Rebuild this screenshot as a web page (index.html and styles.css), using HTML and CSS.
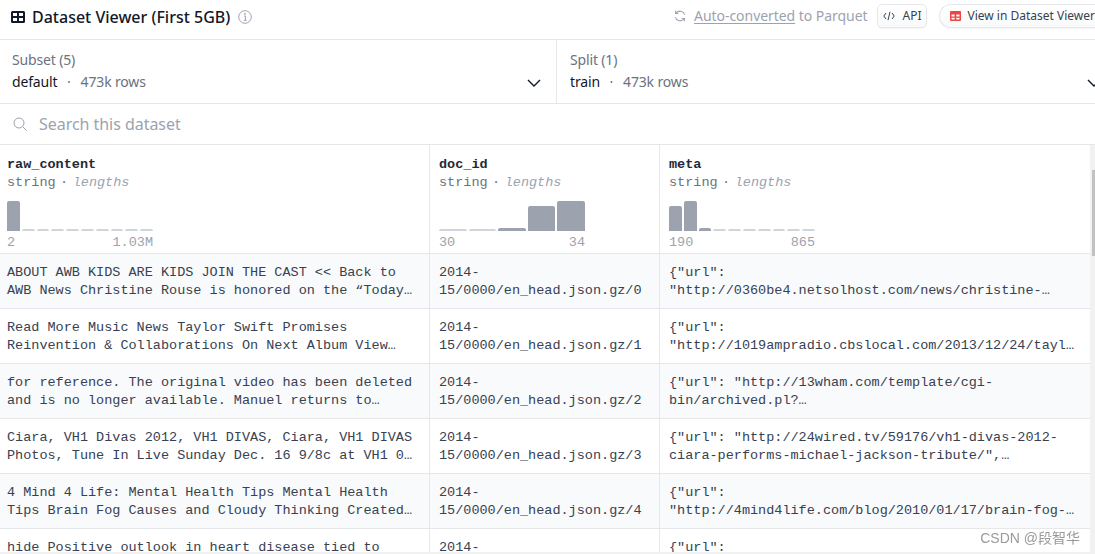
FILE: index.html
```html
<!DOCTYPE html>
<html lang="en">
<head>
<meta charset="utf-8">
<title>Dataset Viewer</title>
<link rel="stylesheet" href="styles.css">
</head>
<body>
<div class="page">
  <header class="topbar">
    <div class="title">
      <svg class="icon-table" viewBox="0 0 14 12" width="14" height="12"><path fill="#111827" fill-rule="evenodd" d="M1.5 0h11A1.5 1.5 0 0 1 14 1.500v9a1.500 1.500 0 0 1-1.500 1.500h-11A1.500 1.500 0 0 1 0 10.500v-9A1.500 1.500 0 0 1 1.500 0zM2 2v3h4V2zm6 0v3h4V2zM2 7v3h4V7zm6 0v3h4V7z"/></svg>
      <span class="title-text">Dataset Viewer (First 5GB)</span>
      <svg class="icon-info" viewBox="0 0 14 14" width="14" height="14"><circle cx="7" cy="7" r="6.300" fill="none" stroke="#9ca3af" stroke-width="1"/><path d="M6 6h1.400v4M5.600 10.300h3" fill="none" stroke="#9ca3af"/><circle cx="7" cy="3.900" r=".9" fill="#9ca3af"/></svg>
    </div>
    <div class="actions">
      <svg class="icon-sync" viewBox="0 0 12 12" width="12" height="12"><path d="M10.700 4.600A5 5 0 0 0 2 3M1.300 7.400A5 5 0 0 0 10 9" fill="none" stroke="#9ca3af" stroke-width="1.100"/><path d="M1.600 .8v2.700h2.700M10.400 11.200V8.500H7.700" fill="none" stroke="#9ca3af" stroke-width="1.100"/></svg>
      <span class="converted"><span class="link">Auto-converted</span> to Parquet</span>
      <span class="btn btn-api"><svg viewBox="0 0 12 10" width="12" height="10"><path d="M3 2 .8 5 3 8M9 2l2.200 3L9 8M7 .8 5 9.200" fill="none" stroke="#374151" stroke-width="1"/></svg>API</span>
      <span class="btn btn-view"><svg viewBox="0 0 11 10" width="11" height="10"><path fill="#ef4444" fill-rule="evenodd" d="M1 0h9a1 1 0 0 1 1 1v8a1 1 0 0 1-1 1H1a1 1 0 0 1-1-1V1a1 1 0 0 1 1-1zm.5 3.500v2h3.200v-2zm4.800 0v2h3.200v-2zM1.500 6.800v1.800h3.200V6.800zm4.800 0v1.800h3.200V6.800z"/></svg>View in Dataset Viewer</span>
    </div>
  </header>

  <section class="selectors">
    <div class="selector subset">
      <div class="sel-text">
        <div class="sel-label">Subset (5)</div>
        <div class="sel-value"><span class="sel-name">default</span><span class="sel-dot">·</span><span>473k rows</span></div>
      </div>
      <svg class="chevron" viewBox="0 0 14 8" width="14" height="8"><path d="M1 1l6 6 6-6" fill="none" stroke="#111827" stroke-width="1.400"/></svg>
    </div>
    <div class="selector split">
      <div class="sel-text">
        <div class="sel-label">Split (1)</div>
        <div class="sel-value"><span class="sel-name">train</span><span class="sel-dot">·</span><span>473k rows</span></div>
      </div>
      <svg class="chevron" viewBox="0 0 14 8" width="14" height="8"><path d="M1 1l6 6 6-6" fill="none" stroke="#111827" stroke-width="1.400"/></svg>
    </div>
  </section>

  <div class="search">
    <svg viewBox="0 0 14 14" width="14" height="14"><circle cx="6" cy="6" r="5" fill="none" stroke="#9ca3af" stroke-width="1"/><path d="M9.700 9.700 13.500 13.500" stroke="#9ca3af" stroke-width="1"/></svg>
    <span>Search this dataset</span>
  </div>

  <div class="table-wrap">
    <div class="grid">
      <div class="th">
        <div class="col-name">raw_content</div>
        <div class="col-type">string<span class="dot">·</span><i>lengths</i></div>
        <div class="hist">
          <b style="height:30px"></b><b class="min"></b><b class="min"></b><b class="min"></b><b class="min"></b><b class="min"></b><b class="min"></b><b class="min"></b><b class="min"></b><b class="min"></b>
        </div>
        <div class="range"><span>2</span><span>1.03M</span></div>
      </div>
      <div class="th">
        <div class="col-name">doc_id</div>
        <div class="col-type">string<span class="dot">·</span><i>lengths</i></div>
        <div class="hist">
          <b class="min"></b><b class="min"></b><b style="height:3px"></b><b style="height:25px"></b><b style="height:30px"></b>
        </div>
        <div class="range"><span>30</span><span>34</span></div>
      </div>
      <div class="th">
        <div class="col-name">meta</div>
        <div class="col-type">string<span class="dot">·</span><i>lengths</i></div>
        <div class="hist">
          <b style="height:25px"></b><b style="height:30px"></b><b style="height:3px"></b><b class="min"></b><b class="min"></b><b class="min"></b><b class="min"></b><b class="min"></b><b class="min"></b><b class="min"></b>
        </div>
        <div class="range"><span>190</span><span>865</span></div>
      </div>

      <div class="td tint">ABOUT AWB KIDS ARE KIDS JOIN THE CAST &lt;&lt; Back to<br>AWB News Christine Rouse is honored on the “Today…</div>
      <div class="td tint">2014-<br>15/0000/en_head.json.gz/0</div>
      <div class="td tint">{"url":<br>"http://0360be4.netsolhost.com/news/christine-…</div>

      <div class="td">Read More Music News Taylor Swift Promises<br>Reinvention &amp; Collaborations On Next Album View…</div>
      <div class="td">2014-<br>15/0000/en_head.json.gz/1</div>
      <div class="td">{"url":<br>"http://1019ampradio.cbslocal.com/2013/12/24/tayl…</div>

      <div class="td tint">for reference. The original video has been deleted<br>and is no longer available. Manuel returns to…</div>
      <div class="td tint">2014-<br>15/0000/en_head.json.gz/2</div>
      <div class="td tint">{"url": "http://13wham.com/template/cgi-<br>bin/archived.pl?…</div>

      <div class="td">Ciara, VH1 Divas 2012, VH1 DIVAS, Ciara, VH1 DIVAS<br>Photos, Tune In Live Sunday Dec. 16 9/8c at VH1 0…</div>
      <div class="td">2014-<br>15/0000/en_head.json.gz/3</div>
      <div class="td">{"url": "http://24wired.tv/59176/vh1-divas-2012-<br>ciara-performs-michael-jackson-tribute/",…</div>

      <div class="td tint">4 Mind 4 Life: Mental Health Tips Mental Health<br>Tips Brain Fog Causes and Cloudy Thinking Created…</div>
      <div class="td tint">2014-<br>15/0000/en_head.json.gz/4</div>
      <div class="td tint">{"url":<br>"http://4mind4life.com/blog/2010/01/17/brain-fog-…</div>

      <div class="td">hide Positive outlook in heart disease tied to</div>
      <div class="td">2014-</div>
      <div class="td">{"url":</div>
    </div>
    <div class="scrollbar"><div class="thumb"></div></div>
  </div>
  <div class="hscroll"></div>
</div>
<div class="watermark">CSDN @段智华</div>
</body>
</html>
```
FILE: styles.css
```css
html, body { margin: 0; padding: 0; height: 100%; overflow: hidden; background: #fff; }
body { font-family: "Noto Sans", "Liberation Sans", sans-serif; color: #111827; }
.page { width: 1095px; height: 554px; display: flex; flex-direction: column; overflow: hidden; }

.topbar { flex: none; height: 31px; padding-bottom: 8px; padding-left: 11px; display: flex; justify-content: space-between; align-items: center; border-bottom: 1px solid #e5e7eb; overflow: hidden; }
.title { display: flex; align-items: center; padding-top: 2px; }
.title-text { font-size: 16px; font-weight: 500; margin-left: 7px; white-space: nowrap; }
.icon-info { margin-left: 8px; }
.actions { display: flex; align-items: center; flex: none; margin-right: -4px; }
.converted { font-size: 14px; color: #9ca3af; margin-left: 8px; white-space: nowrap; letter-spacing: -.05px; }
.link { text-decoration: underline; text-underline-offset: 2px; color: #9ca3af; }
.btn { display: flex; align-items: center; height: 22px; border: 1px solid #e5e7eb; background: linear-gradient(#fff, #f9fafb); font-size: 12px; color: #374151; white-space: nowrap; box-shadow: 0 1px 1px rgba(0,0,0,.04); }
.btn-api { margin-left: 10px; padding: 0 5px; border-radius: 5px; gap: 7px; }
.btn-view { margin-left: 12px; padding: 0 4px 0 10px; border-radius: 12px 0 0 12px; border-right: 0; gap: 6px; }

.selectors { display: flex; height: 63px; flex: none; border-bottom: 1px solid #e5e7eb; overflow: hidden; }
.selector { display: flex; align-items: center; justify-content: space-between; box-sizing: border-box; padding-left: 12px; flex: none; }
.subset { width: 557px; border-right: 1px solid #e5e7eb; padding-right: 15px; }
.subset .chevron { margin-top: 22px; }
.split { width: 538px; padding-left: 13px; padding-right: 0; }
.split .chevron { margin-top: 22px; margin-right: -6px; }
.sel-text { font-size: 14px; line-height: 22px; letter-spacing: -.15px; padding-bottom: 2px; }
.sel-label { color: #6b7280; }
.sel-value { color: #6b7280; display: flex; }
.sel-name { color: #111827; }
.sel-dot { margin: 0 10px 0 9.500px; color: #6b7280; }

.search { height: 40px; flex: none; display: flex; align-items: center; border-bottom: 1px solid #e5e7eb; padding-left: 13px; font-size: 16px; color: #9ca3af; letter-spacing: -.04px; gap: 12px; }

.table-wrap { flex: 1; display: flex; min-height: 0; overflow: hidden; }
.grid { width: 1090px; flex: none; display: grid; grid-template-columns: 430px 230px 430px; grid-template-rows: 109px repeat(6, 55px); font-family: "Liberation Mono", "DejaVu Sans Mono", monospace; font-size: 13.500px; }
.th, .td { box-sizing: border-box; border-right: 1px solid #e5e7eb; border-bottom: 1px solid #e5e7eb; padding-left: 7px; overflow: hidden; white-space: nowrap; }
.th:nth-child(3n), .td:nth-child(3n) { border-right: 0; padding-left: 9px; }
.th:nth-child(3n+2), .td:nth-child(3n+2) { padding-left: 9px; }
.th { padding-top: 11px; }
.td { padding-top: 10px; line-height: 18px; color: #374151; }
.tint { background: #f9fafb; }

.col-name { font-weight: 700; line-height: 18px; color: #1f2937; }
.col-type { line-height: 18px; color: #6b7280; }
.col-type .dot { margin: 0 4.500px; }
.col-type i { color: #9ca3af; }
.hist { display: flex; align-items: flex-end; width: 146px; height: 30px; margin-top: 9px; gap: 2px; }
.hist b { flex: 1; background: #9ca3af; border-radius: 2px 2px 0 0; display: block; }
.hist b.min { height: 2px; background: #d1d5db; }
.range { width: 146px; display: flex; justify-content: space-between; line-height: 18px; color: #9ca3af; margin-top: 3px; }

.scrollbar { width: 5px; flex: none; background: #f1f1f1; display: flex; flex-direction: column; align-items: flex-end; }
.thumb { width: 3px; height: 86px; margin-top: 25px; background: #c1c1c1; }
.hscroll { flex: none; height: 2px; background: #f1f1f1; }

.watermark { position: fixed; right: 15px; bottom: 7px; font-family: "Liberation Sans", "Noto Sans CJK SC", sans-serif; font-size: 14px; color: #9a9a9a; }
```
